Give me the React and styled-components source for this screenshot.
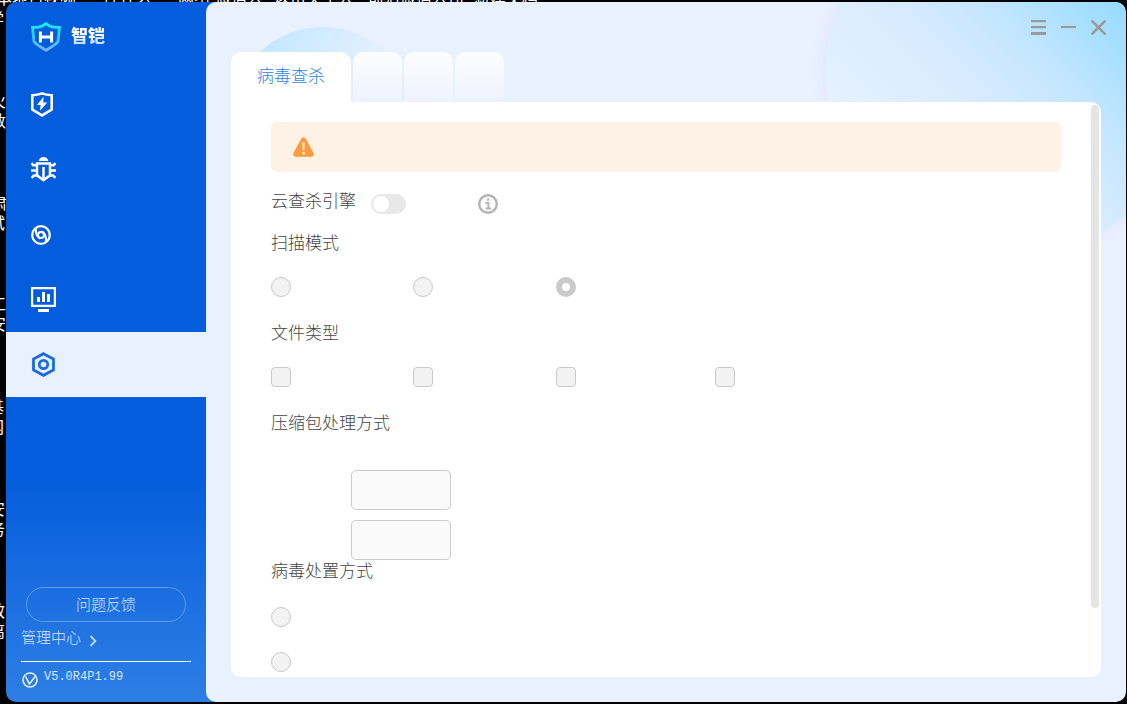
import styled, { createGlobalStyle, css } from 'styled-components';

const GlobalStyle = createGlobalStyle`
    * {
        box-sizing: border-box;
    }

    body {
        margin: 0;
        background: #000;
        font-family: "Liberation Sans", "Noto Sans CJK SC", sans-serif;
        font-weight: 300;
    }

    button, input {
        margin: 0;
        padding: 0;
        border: 0;
        background: none;
        font: inherit;
        color: inherit;
    }

    h2, p {
        margin: 0;
        font-weight: inherit;
    }
`;

// captions of the desktop icons behind the window
const desktopNotes = [
    { x: -12, y: 10, text: '学' },
    { x: -10, y: 92, text: '火' },
    { x: -10, y: 112, text: '数' },
    { x: -9, y: 194, text: '肃' },
    { x: -11, y: 214, text: '试' },
    { x: -10, y: 295, text: '工' },
    { x: -10, y: 315, text: '安' },
    { x: -12, y: 398, text: '基' },
    { x: -12, y: 418, text: '网' },
    { x: -11, y: 500, text: '安' },
    { x: -11, y: 520, text: '务' },
    { x: -11, y: 602, text: '效' },
    { x: -11, y: 622, text: '离' },
    { x: -4, y: -11, text: '本地百视频' },
    { x: 104, y: -11, text: '库什么' },
    { x: 178, y: -11, text: '网络·微信公' },
    { x: 274, y: -11, text: '以市关于人' },
    { x: 368, y: -11, text: '前沿微信公司' },
    { x: 474, y: -11, text: '新建文档' },
];

const ShieldIcon = () => (
    <svg width="22" height="25" viewBox="0 0 22 25" fill="none">
        <path d="M11 1.4C8 2.6 4.5 3.1 1.3 3.2V17.6L11 23.4L20.7 17.6V3.2C17.5 3.1 14 2.6 11 1.4Z" stroke="#fff" strokeWidth="2.6" />
        <path d="M12.6 4.8L6 12.9H9.6L9 18.8L16.2 10.4H12.2Z" fill="#fff" />
    </svg>
);

const BugIcon = () => (
    <svg width="25" height="25" viewBox="0 0 25 25" fill="none" stroke="#fff" strokeWidth="2.5">
        <path d="M7.6 4C8.2 1.4 10 0 12.5 0S16.8 1.4 17.4 4Z" fill="#fff" stroke="none" />
        <path d="M6 6.5H19V18.3L12.5 23.2L6 18.3Z" />
        <path d="M12.5 10V22" />
        <path d="M0 13.5H5M20 13.5H25" />
        <path d="M0.5 6L2.3 8.3H6M24.5 6L22.7 8.3H19" />
        <path d="M0.5 21L2.8 18.5H6M24.5 21L22.2 18.5H19" />
    </svg>
);

const DiscIcon = () => (
    <svg width="20" height="20" viewBox="0 0 20 20" fill="none" stroke="#fff">
        <circle cx="10" cy="10" r="8.8" strokeWidth="2.3" />
        <circle cx="10" cy="10" r="3" strokeWidth="2" />
        <path d="M5.2 2.8C4.4 7.6 5.3 11.2 9.2 13.6" strokeWidth="2" />
        <path d="M14.8 17.2C15.6 12.4 14.7 8.8 10.8 6.4" strokeWidth="2" />
    </svg>
);

const MonitorIcon = () => (
    <svg width="25" height="25" viewBox="0 0 25 25" fill="#fff">
        <path d="M0 0H25V20H0ZM2.2 2.2V17.8H22.8V2.2Z" fillRule="evenodd" />
        <path d="M6 10H9V15H6ZM11 5H14V15H11ZM16 7H19V15H16ZM7 22H18V25H7Z" />
    </svg>
);

const SettingIcon = () => (
    <svg width="25" height="25" viewBox="0 0 25 25" fill="none" stroke="#1a6be0">
        <path d="M12.5 1.7L22.5 7.1V17.9L12.5 23.3L2.5 17.9V7.1Z" strokeWidth="2.8" />
        <circle cx="12.5" cy="12.5" r="4.2" strokeWidth="2.8" />
    </svg>
);

const LogoIcon = () => (
    <svg width="30" height="30" viewBox="0 0 30 30" fill="none">
        <defs>
            <linearGradient id="logo" x1="0" y1="0" x2="0" y2="1">
                <stop offset="0" stopColor="#17f3f3" />
                <stop offset="0.4" stopColor="#22cdf0" />
                <stop offset="1" stopColor="#74b4fb" />
            </linearGradient>
        </defs>
        <path d="M15 1.6L18.5 4Q23 5.8 28.5 5.4L27 19.5Q25.6 22 15 28.2Q4.4 22 3 19.5L1.5 5.4Q7 5.8 11.5 4Z" stroke="url(#logo)" strokeWidth="2.8" />
        <path d="M9.4 9.4V20.6M20.6 9.4V20.6M9.4 15H20.6" stroke="#fff" strokeWidth="3" />
    </svg>
);

const VersionIcon = () => (
    <svg width="16" height="16" viewBox="0 0 16 16" fill="none" stroke="#e4effd" strokeWidth="1.6">
        <circle cx="8" cy="8" r="7" />
        <path d="M3.6 4.6L7.4 12L13.4 4.2" />
    </svg>
);

const ChevronIcon = () => (
    <svg width="8" height="12" viewBox="0 0 8 12" fill="none" stroke="#b9d4f8" strokeWidth="2">
        <path d="M1.5 1L6.3 6L1.5 11" />
    </svg>
);

const WarningIcon = () => (
    <svg width="21" height="20" viewBox="0 0 21 20">
        <path d="M8.2 1.8Q10.5 -1.2 12.8 1.8L20.3 15.6Q22 19.6 18.2 19.8H2.8Q-1 19.6 0.7 15.6Z" fill="#ff9a3e" />
        <path d="M9.2 5.5H11.8L11.4 13.5H9.6ZM9.2 15H11.8V17.5H9.2Z" fill="#ffe6cf" />
    </svg>
);

const InfoIcon = () => (
    <svg width="20" height="20" viewBox="0 0 20 20" fill="none" stroke="#b3b3b3">
        <circle cx="10" cy="10" r="8.8" strokeWidth="2.4" />
        <path d="M9 4.5H11.5V6.8H9Z" fill="#b3b3b3" stroke="none" />
        <path d="M7.5 9H10.4V14.3M7.5 14.4H13" strokeWidth="2" />
    </svg>
);

const MenuIcon = () => (
    <svg width="15" height="15" viewBox="0 0 15 15" fill="#999">
        <path d="M0 0H15V2.2H0ZM0 6H15V8.3H0ZM0 12H15V15H0Z" />
    </svg>
);

const MinusIcon = () => (
    <svg width="15" height="15" viewBox="0 0 15 15" fill="#999">
        <path d="M0 6H15V8H0Z" />
    </svg>
);

const CloseIcon = () => (
    <svg width="15" height="15" viewBox="0 0 15 15" fill="none" stroke="#999" strokeWidth="2.6">
        <path d="M0.5 0.5L14.5 14.5M14.5 0.5L0.5 14.5" />
    </svg>
);

const navItems = [
    { id: 'protect', label: '防护', icon: <ShieldIcon /> },
    { id: 'virus', label: '病毒', icon: <BugIcon /> },
    { id: 'disc', label: '磁盘', icon: <DiscIcon /> },
    { id: 'monitor', label: '监控', icon: <MonitorIcon /> },
    { id: 'setting', label: '设置', icon: <SettingIcon />, active: true },
];

const Sidebar = () => {
    return (
        <Aside>
            <Brand>
                <LogoIcon />
                <BrandName>智铠</BrandName>
            </Brand>
            <Nav>
                {navItems.map((item) => (
                    <NavItem key={item.id} type="button" aria-label={item.label} $active={item.active}>
                        {item.icon}
                    </NavItem>
                ))}
            </Nav>
            <SideFooter>
                <FeedbackButton type="button">问题反馈</FeedbackButton>
                <CenterLink href="#center">
                    管理中心
                    <ChevronIcon />
                </CenterLink>
                <Version>
                    <VersionIcon />
                    <p>V5.0R4P1.99</p>
                </Version>
            </SideFooter>
        </Aside>
    );
}

const Settings = () => {
    return (
        <Panel>
            <Notice>
                <WarningIcon />
            </Notice>

            <EngineRow>
                <Title as="label" htmlFor="engine">云查杀引擎</Title>
                <Switch id="engine" type="checkbox" role="switch" />
                <InfoIcon />
            </EngineRow>

            <Section $first>
                <Title>扫描模式</Title>
                <Options>
                    <Radio name="scan" aria-label="扫描模式 1" />
                    <Radio name="scan" aria-label="扫描模式 2" />
                    <Radio name="scan" aria-label="扫描模式 3" defaultChecked />
                </Options>
            </Section>

            <Section>
                <Title>文件类型</Title>
                <Options>
                    <Checkbox aria-label="文件类型 1" />
                    <Checkbox aria-label="文件类型 2" />
                    <Checkbox aria-label="文件类型 3" />
                    <Checkbox aria-label="文件类型 4" />
                </Options>
            </Section>

            <Section>
                <Title>压缩包处理方式</Title>
                <Fields>
                    <Field type="text" aria-label="压缩包处理方式 1" />
                    <Field type="text" aria-label="压缩包处理方式 2" />
                </Fields>
            </Section>

            <Title>病毒处置方式</Title>
            <RadioList>
                <Radio name="action" aria-label="病毒处置方式 1" />
                <Radio name="action" aria-label="病毒处置方式 2" />
            </RadioList>

            <ScrollThumb />
        </Panel>
    );
}

const App = () => {
    return (
        <Desktop>
            <GlobalStyle />
            {desktopNotes.map((note, i) => (
                <DesktopNote key={i} aria-hidden="true" style={{ left: note.x, top: note.y }}>
                    {note.text}
                </DesktopNote>
            ))}
            <Window>
                <Sidebar />
                <Main>
                    <CornerGlow />
                    <TabGlow />
                    <TitleBar>
                        <WindowButton type="button" aria-label="菜单"><MenuIcon /></WindowButton>
                        <WindowButton type="button" aria-label="最小化"><MinusIcon /></WindowButton>
                        <WindowButton type="button" aria-label="关闭"><CloseIcon /></WindowButton>
                    </TitleBar>
                    <Tabs>
                        <Tab type="button" $active>病毒查杀</Tab>
                        <Tab type="button" aria-label="标签 2" />
                        <Tab type="button" aria-label="标签 3" />
                        <Tab type="button" aria-label="标签 4" />
                    </Tabs>
                    <Settings />
                </Main>
            </Window>
        </Desktop>
    );
}

const Desktop = styled.div`
    position: relative;
    display: flex;
    min-height: 100vh;
    padding: 2px 1px 2px 6px;
    overflow: hidden;
    background: #000;
`

const DesktopNote = styled.span`
    position: absolute;
    font-size: 16px;
    line-height: 20px;
    font-weight: 400;
    white-space: nowrap;
    color: #fff;
`

const Window = styled.div`
    position: relative;
    display: flex;
    flex: 1;
    border-radius: 10px;
    overflow: hidden;
    background: linear-gradient(#045ddc 0, #045ddc 68%, #1c6fe0 85%, #2d7ee4 100%);
`

const Aside = styled.aside`
    display: flex;
    flex-direction: column;
    flex: none;
    width: 200px;
`

const Brand = styled.div`
    display: flex;
    align-items: center;
    gap: 10px;
    height: 70px;
    padding-left: 25px;
`

const BrandName = styled.span`
    font-size: 17px;
    line-height: 22px;
    font-weight: 900;
    background: linear-gradient(#fff 40%, #a9cbf8);
    background-clip: text;
    color: transparent;
`

const Nav = styled.nav`
    display: flex;
    flex-direction: column;
`

const NavItem = styled.button`
    display: flex;
    align-items: center;
    height: 65px;
    padding-left: 25px;
    background: ${props => props.$active ? '#e9f1fe' : 'transparent'};
`

const SideFooter = styled.div`
    display: flex;
    flex-direction: column;
    margin-top: auto;
    padding: 0 15px 14px;
    font-size: 15px;
    line-height: 20px;
    color: #d7e6fb;
`

const FeedbackButton = styled.button`
    height: 35px;
    margin: 0 5px;
    border: 1px solid #5c9deb;
    border-radius: 18px;
`

const CenterLink = styled.a`
    display: flex;
    align-items: center;
    gap: 8px;
    height: 40px;
    padding-bottom: 7px;
    color: inherit;
    text-decoration: none;
    border-bottom: 1px solid #fff;

    svg {
        margin-top: 6px;
    }
`

const Version = styled.div`
    display: flex;
    align-items: flex-end;
    gap: 6px;
    padding: 7px 0 0 1px;

    p {
        padding-bottom: 3px;
        font-family: "Liberation Mono", monospace;
        font-size: 12px;
        line-height: 16px;
    }
`

const Main = styled.main`
    position: relative;
    display: flex;
    flex-direction: column;
    flex: 1;
    min-width: 0;
    padding: 0 25px 25px;
    border-radius: 10px;
    overflow: hidden;
    background: #e9f0fe;
`

const CornerGlow = styled.div`
    position: absolute;
    top: -117px;
    right: -70px;
    width: 370px;
    height: 370px;
    border-radius: 50%;
    background: linear-gradient(225deg, #94daff 25%, #c4e6ff 45%, #d8ebfe 58%, #e6f2ff 80%);
    box-shadow: 0 0 14px rgba(205, 205, 255, 0.35);
`

const TabGlow = styled.div`
    position: absolute;
    top: 25px;
    left: 25px;
    width: 184px;
    height: 184px;
    border-radius: 50%;
    background: linear-gradient(120deg, #c4e8ff 15%, #e2effe 55%);
`

const TitleBar = styled.header`
    position: relative;
    display: flex;
    align-items: center;
    justify-content: flex-end;
    height: 50px;
`

const WindowButton = styled.button`
    display: flex;
    align-items: center;
    justify-content: center;
    width: 30px;
    height: 30px;

    &:last-child {
        width: 15px;
        margin: 0 -5px 0 8px;
    }
`

const Tabs = styled.div`
    position: relative;
    display: flex;
    gap: 2px;
    height: 50px;
`

const Tab = styled.button`
    width: ${props => props.$active ? '120px' : '49px'};
    border-radius: 10px 10px 0 0;
    font-size: 17px;
    line-height: 22px;
    color: #2f7fe6;
    background: ${props => props.$active ? '#fff' : 'linear-gradient(#fdfeff, #eef2fe)'};
`

const Panel = styled.section`
    position: relative;
    flex: 1;
    padding: 20px 40px 5px;
    border-radius: 0 10px 10px 10px;
    background: #fff;
`

const Notice = styled.div`
    display: flex;
    align-items: center;
    height: 50px;
    padding-left: 22px;
    border-radius: 6px;
    background: #fef1e5;
`

const EngineRow = styled.div`
    display: flex;
    align-items: flex-end;
    height: 23px;
    margin-top: 19px;

    label {
        align-self: flex-start;
        width: 100px;
    }

    svg {
        margin-left: 72px;
    }
`

const Title = styled.h2`
    font-size: 17px;
    line-height: 22px;
    color: #444;
`

const Section = styled.div`
    margin-top: ${props => props.$first ? '19px' : '26px'};
`

const Options = styled.div`
    display: grid;
    grid-template-columns: 142px 143px 159px auto;
    margin-top: 22px;
`

const Switch = styled.input`
    appearance: none;
    display: flex;
    align-items: center;
    width: 35px;
    height: 20px;
    padding: 0 2px;
    border-radius: 10px;
    background: #e8e8e8;

    &::before {
        content: '';
        width: 16px;
        height: 16px;
        border-radius: 50%;
        background: #fff;
    }
`

const choice = css`
    appearance: none;
    width: 20px;
    height: 20px;
    border: 1px solid #c9c9c9;
    background: #f2f2f2;
`

const Radio = styled.input.attrs({ type: 'radio' })`
    ${choice}
    border-radius: 50%;

    &:checked {
        border: 6px solid #cacaca;
        background: #fff;
    }
`

const Checkbox = styled.input.attrs({ type: 'checkbox' })`
    ${choice}
    border-radius: 4px;
`

const Fields = styled.div`
    display: flex;
    flex-direction: column;
    gap: 10px;
    margin: 35px 0 1px 80px;
`

const Field = styled.input`
    width: 100px;
    height: 40px;
    padding: 0 10px;
    border: 1px solid #ccc;
    border-radius: 5px;
    background: #fafafa;
`

const RadioList = styled.div`
    display: flex;
    flex-direction: column;
    gap: 25px;
    margin-top: 24px;
`

const ScrollThumb = styled.div`
    position: absolute;
    top: 3px;
    right: 2px;
    width: 8px;
    height: calc(88% - 3px);
    border-radius: 4px;
    background: #e5e5e5;
`

export default App;
